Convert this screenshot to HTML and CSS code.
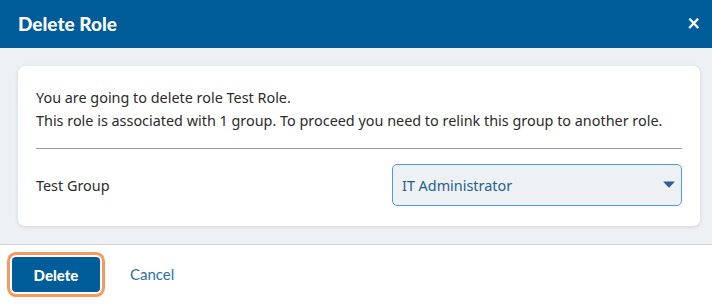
FILE: index.html
```html
<!DOCTYPE html>
<html lang="en">
<head>
    <meta charset="UTF-8">
    <title>Delete Role</title>
    <link rel="stylesheet" href="styles.css">
</head>
<body>
    <div class="modal">
        <header class="modal-header">
            <h1>Delete Role</h1>
            <span class="close">&times;</span>
        </header>
        <div class="modal-body">
            <div class="card">
                <p>You are going to delete role Test Role.</p>
                <p>This role is associated with 1 group. To proceed you need to relink this group to another role.</p>
                <hr>
                <div class="relink-row">
                    <span class="group-name">Test Group</span>
                    <div class="select">
                        <span>IT Administrator</span>
                        <svg width="12" height="7" viewBox="0 0 12 7"><path d="M0 0.5h12L6 6.8z" fill="#2d5f94"/></svg>
                    </div>
                </div>
            </div>
        </div>
        <footer class="modal-footer">
            <button type="button" class="btn-delete">Delete</button>
            <a href="#" class="btn-cancel">Cancel</a>
        </footer>
    </div>
</body>
</html>
```

FILE: styles.css
```css
body {
    margin: 0;
    background-color: #ffffff;
    font-family: "Noto Sans", "Open Sans", sans-serif;
}
.modal {
    width: 712px;
    height: 306px;
    display: flex;
    flex-direction: column;
}
.modal-header {
    height: 48px;
    background-color: #005d99;
    color: white;
    display: flex;
    align-items: center;
    justify-content: space-between;
    padding: 0 12px 0 18px;
    box-sizing: border-box;
}
.modal-header h1 {
    margin: 0;
    font-family: Lato, sans-serif;
    font-size: 19px;
    font-weight: 900;
    padding-bottom: 2px;
}
.close {
    font-family: Lato, sans-serif;
    font-size: 22px;
    font-weight: bold;
    line-height: 1;
    padding-bottom: 2px;
}
.modal-body {
    background-color: #eef1f4;
    padding: 18px 12px 18px 18px;
    border-bottom: 1px solid #d3d6da;
}
.card {
    background-color: white;
    border-radius: 7px;
    box-shadow: 0 1px 4px rgba(0,0,0,0.12);
    padding: 20px 18px 19px 18px;
    height: 160px;
    box-sizing: border-box;
}
.card p {
    margin: 0;
    font-size: 14.4px;
    line-height: 23px;
    color: #2b2b2b;
}
.card hr {
    border: none;
    border-top: 1px solid #9a9a9a;
    margin: 16px 0 15px 0;
}
.relink-row {
    display: flex;
    align-items: center;
    justify-content: space-between;
}
.group-name {
    font-size: 14.4px;
    color: #2b2b2b;
}
.select {
    width: 290px;
    height: 42px;
    box-sizing: border-box;
    border: 1px solid #4b9bf0;
    border-radius: 5px;
    background-color: #eef1f4;
    display: flex;
    align-items: center;
    justify-content: space-between;
    padding: 0 6px 0 9px;
    font-size: 14.4px;
    color: #1f5f8e;
}
.select svg {
    margin-bottom: 1px;
}
.modal-footer {
    flex: 1;
    display: flex;
    align-items: flex-start;
    padding: 12px 0 0 12px;
}
.btn-delete {
    width: 88px;
    height: 35px;
    background-color: #005d99;
    border: none;
    color: white;
    font-family: Lato, sans-serif;
    font-size: 15px;
    font-weight: 900;
    box-shadow: 0 0 0 2px #ffffff, 0 0 0 5px #f59a5c;
    border-radius: 4px;
    cursor: pointer;
}
.btn-cancel {
    margin-left: 30px;
    line-height: 35px;
    font-family: Lato, sans-serif;
    font-size: 15px;
    color: #2c6fa8;
    text-decoration: none;
}
```
